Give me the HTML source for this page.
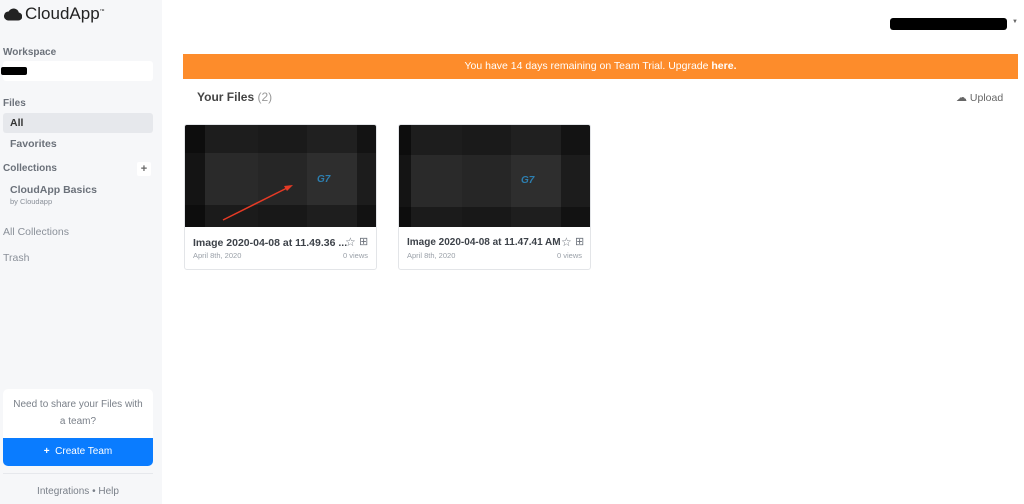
<!DOCTYPE html>
<html><head><meta charset="utf-8"><style>
*{margin:0;padding:0;box-sizing:border-box}
body{width:1024px;height:504px;overflow:hidden;background:#fff;font-family:"Liberation Sans",sans-serif;position:relative;color:#4a4f57}
.sb{position:absolute;left:0;top:0;width:162px;height:504px;background:#f6f7f9}
.a{position:absolute}
.lbl{font-size:10px;color:#6b717a;font-weight:bold}
.it{font-size:10.5px;color:#6b717a;font-weight:bold}
.card{position:absolute;top:124px;width:193px;height:146px;border:1px solid #e3e5e8;border-radius:3px;overflow:hidden;background:#fff}
.img{height:102px;background:#232323;position:relative;overflow:hidden}
.t{position:absolute;left:8px;top:112px;font-size:10.5px;font-weight:bold;color:#3d4249;white-space:nowrap}
.d{position:absolute;left:8px;top:126px;font-size:7.5px;color:#9aa0a8}
.v{position:absolute;right:8px;top:126px;font-size:7.5px;color:#9aa0a8}
.ic{position:absolute;top:110px;font-size:12px;color:#6b717a}
</style></head><body>
<div class="sb">
 <svg class="a" style="left:4px;top:7px" width="18" height="14" viewBox="0 0 18 14"><path d="M4 13h10a3.5 3.5 0 0 0 .5-7A5 5 0 0 0 5 5a4 4 0 0 0-1 8z" fill="#222" stroke="#222"/></svg>
 <div class="a" style="left:25px;top:4px;font-size:17px;color:#222">CloudApp<sup style="font-size:5px">™</sup></div>
 <div class="a lbl" style="left:3px;top:47px">Workspace</div>
 <div class="a" style="left:3px;top:61px;width:150px;height:20px;background:#fff;border-radius:3px"></div>
 <div class="a" style="left:1px;top:67px;width:26px;height:8px;background:#000;border-radius:2px"></div>
 <div class="a lbl" style="left:3px;top:98px">Files</div>
 <div class="a" style="left:3px;top:113px;width:150px;height:20px;background:#e6e8ec;border-radius:3px"></div>
 <div class="a it" style="left:10px;top:117px;color:#333">All</div>
 <div class="a it" style="left:10px;top:138px">Favorites</div>
 <div class="a lbl" style="left:3px;top:163px">Collections</div>
 <div class="a" style="left:137px;top:162px;width:14px;height:14px;background:#fff;border-radius:2px;font-size:11px;text-align:center;line-height:14px;font-weight:bold;color:#666">+</div>
 <div class="a it" style="left:10px;top:184px">CloudApp Basics</div>
 <div class="a" style="left:10px;top:197px;font-size:7.5px;color:#8a9099">by Cloudapp</div>
 <div class="a" style="left:3px;top:226px;font-size:10.5px;color:#8a9099">All Collections</div>
 <div class="a" style="left:3px;top:252px;font-size:10.5px;color:#8a9099">Trash</div>
 <div class="a" style="left:3px;top:389px;width:150px;height:77px;background:#fff;border-radius:5px;overflow:hidden">
  <div style="font-size:10px;color:#7a8089;text-align:center;line-height:17px;padding-top:7px">Need to share your Files with<br>a team?</div>
  <div style="position:absolute;left:0;top:49px;width:150px;height:28px;background:#0a7cff;color:#fff;font-size:10px;text-align:center;line-height:28px"><b>+</b>&nbsp; Create Team</div>
 </div>
 <div class="a" style="left:3px;top:473px;width:150px;height:1px;background:#e6e8ec"></div>
 <div class="a" style="left:0;top:486px;width:156px;text-align:center;font-size:10px;color:#7a8089">Integrations • Help</div>
</div>
<div class="a" style="left:890px;top:18px;width:117px;height:12px;background:#000;border-radius:3px"></div>
<div class="a" style="left:1012px;top:19px;font-size:6px;color:#666">▼</div>
<div class="a" style="left:183px;top:54px;width:835px;height:25px;background:#fd8c2b;color:#fff;font-size:10.5px;text-align:center;line-height:25px">You have 14 days remaining on Team Trial. Upgrade <b>here.</b></div>
<div class="a" style="left:197px;top:90px;font-size:12px;font-weight:bold;color:#444">Your Files <span style="color:#999;font-weight:normal">(2)</span></div>
<div class="a" style="left:956px;top:91px;font-size:10.5px;color:#666"><span style="font-size:11px">☁</span> Upload</div>
<div class="card" style="left:184px">
 <div class="img" style="background:linear-gradient(90deg,#141414 0 20px,#2a2a2a 20px 73px,#262626 73px 122px,#2e2e2e 122px 172px,#1c1c1c 172px)">
  <div class="a" style="left:0;top:0;width:193px;height:28px;background:rgba(0,0,0,.3)"></div>
  <div class="a" style="left:0;top:80px;width:193px;height:22px;background:rgba(0,0,0,.35)"></div>
  <div class="a" style="left:132px;top:49px;font-size:10px;font-weight:bold;color:#2d7fb0;font-style:italic">G7</div>
  <svg class="a" style="left:0;top:0" width="193" height="102"><line x1="38" y1="95" x2="104" y2="62" stroke="#e53a25" stroke-width="1.5"/><path d="M108 60l-9 1 3 5z" fill="#e53a25"/></svg>
 </div>
 <div class="t">Image 2020-04-08 at 11.49.36 ...</div>
 <div class="ic" style="left:160px">☆</div><div class="ic" style="left:174px;font-size:11px">⊞</div>
 <div class="d">April 8th, 2020</div><div class="v">0 views</div>
</div>
<div class="card" style="left:398px">
 <div class="img" style="background:linear-gradient(90deg,#141414 0 12px,#2a2a2a 12px 63px,#262626 63px 112px,#2e2e2e 112px 162px,#1c1c1c 162px)">
  <div class="a" style="left:0;top:0;width:193px;height:30px;background:rgba(0,0,0,.3)"></div>
  <div class="a" style="left:0;top:82px;width:193px;height:20px;background:rgba(0,0,0,.35)"></div>
  <div class="a" style="left:122px;top:50px;font-size:10px;font-weight:bold;color:#2d7fb0;font-style:italic">G7</div>
 </div>
 <div class="t" style="font-size:10px">Image 2020-04-08 at 11.47.41 AM</div>
 <div class="ic" style="left:162px">☆</div><div class="ic" style="left:176px;font-size:11px">⊞</div>
 <div class="d">April 8th, 2020</div><div class="v">0 views</div>
</div>
</body></html>
